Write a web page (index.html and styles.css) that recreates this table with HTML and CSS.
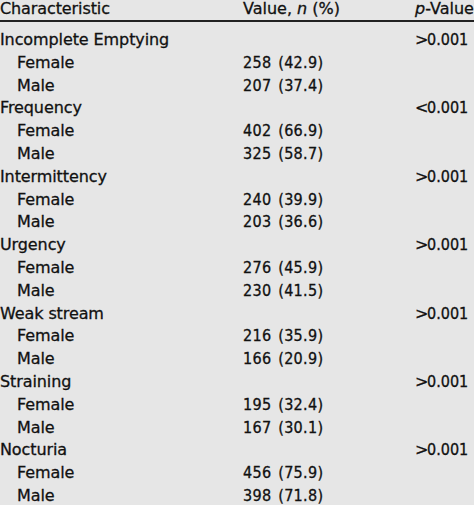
FILE: index.html
```html
<!DOCTYPE html>
<html>
<head>
<meta charset="utf-8">
<link rel="stylesheet" href="styles.css">
</head>
<body>
<div class="table">
  <div class="row head">
    <div class="c1">Characteristic</div>
    <div class="c2">Value, <i>n</i> (%)</div>
    <div class="c3"><i>p</i>-Value</div>
  </div>
  <div class="rule"></div>
  <div class="row"><div class="c1">Incomplete Emptying</div><div class="c2"></div><div class="c3"><span class="op">&gt;</span><span class="pv">0.001</span></div></div>
  <div class="row"><div class="c1 sub">Female</div><div class="c2 num">258 (42.9)</div><div class="c3"></div></div>
  <div class="row"><div class="c1 sub">Male</div><div class="c2 num">207 (37.4)</div><div class="c3"></div></div>
  <div class="row"><div class="c1">Frequency</div><div class="c2"></div><div class="c3"><span class="op">&lt;</span><span class="pv">0.001</span></div></div>
  <div class="row"><div class="c1 sub">Female</div><div class="c2 num">402 (66.9)</div><div class="c3"></div></div>
  <div class="row"><div class="c1 sub">Male</div><div class="c2 num">325 (58.7)</div><div class="c3"></div></div>
  <div class="row"><div class="c1">Intermittency</div><div class="c2"></div><div class="c3"><span class="op">&gt;</span><span class="pv">0.001</span></div></div>
  <div class="row"><div class="c1 sub">Female</div><div class="c2 num">240 (39.9)</div><div class="c3"></div></div>
  <div class="row"><div class="c1 sub">Male</div><div class="c2 num">203 (36.6)</div><div class="c3"></div></div>
  <div class="row"><div class="c1">Urgency</div><div class="c2"></div><div class="c3"><span class="op">&gt;</span><span class="pv">0.001</span></div></div>
  <div class="row"><div class="c1 sub">Female</div><div class="c2 num">276 (45.9)</div><div class="c3"></div></div>
  <div class="row"><div class="c1 sub">Male</div><div class="c2 num">230 (41.5)</div><div class="c3"></div></div>
  <div class="row"><div class="c1">Weak stream</div><div class="c2"></div><div class="c3"><span class="op">&gt;</span><span class="pv">0.001</span></div></div>
  <div class="row"><div class="c1 sub">Female</div><div class="c2 num">216 (35.9)</div><div class="c3"></div></div>
  <div class="row"><div class="c1 sub">Male</div><div class="c2 num">166 (20.9)</div><div class="c3"></div></div>
  <div class="row"><div class="c1">Straining</div><div class="c2"></div><div class="c3"><span class="op">&gt;</span><span class="pv">0.001</span></div></div>
  <div class="row"><div class="c1 sub">Female</div><div class="c2 num">195 (32.4)</div><div class="c3"></div></div>
  <div class="row"><div class="c1 sub">Male</div><div class="c2 num">167 (30.1)</div><div class="c3"></div></div>
  <div class="row"><div class="c1">Nocturia</div><div class="c2"></div><div class="c3"><span class="op">&gt;</span><span class="pv">0.001</span></div></div>
  <div class="row"><div class="c1 sub">Female</div><div class="c2 num">456 (75.9)</div><div class="c3"></div></div>
  <div class="row"><div class="c1 sub">Male</div><div class="c2 num">398 (71.8)</div><div class="c3"></div></div>
</div>
</body>
</html>
```
FILE: styles.css
```css
html, body {
  margin: 0;
  padding: 0;
  background: #e6e6e6;
}
body {
  width: 474px;
  height: 505px;
  overflow: hidden;
  font-family: "DejaVu Sans", sans-serif;
  font-size: 16px;
  color: #111;
  -webkit-text-stroke: 0.3px #111;
}
.table {
  display: flex;
  flex-direction: column;
}
.row {
  display: grid;
  grid-template-columns: 243px 170px 1fr;
  height: 22.8px;
  line-height: 22.8px;
  white-space: nowrap;
}
.head {
  height: 19.5px;
  line-height: 17px;
}
.rule {
  height: 2px;
  background: #222;
  margin-bottom: 7.5px;
}
.c1 {
  letter-spacing: -0.1px;
}
.sub {
  padding-left: 17px;
}
.num {
  font-family: "DejaVu Sans Condensed", "DejaVu Sans", sans-serif;
  font-stretch: condensed;
  letter-spacing: 0.3px;
  word-spacing: 2px;
}
.c3 {
  padding-left: 2px;
}
.op {
  display: inline-block;
  width: 12px;
}
.pv {
  font-family: "DejaVu Sans Condensed", "DejaVu Sans", sans-serif;
  font-stretch: condensed;
}
```
